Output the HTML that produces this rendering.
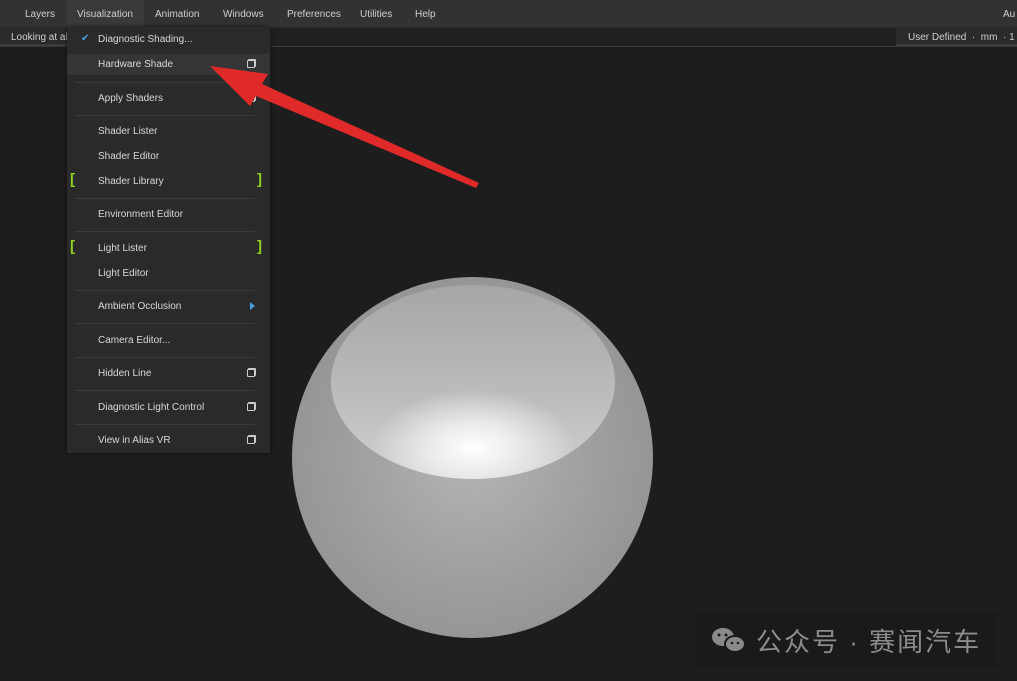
<!DOCTYPE html>
<html><head><meta charset="utf-8"><style>
*{margin:0;padding:0;box-sizing:border-box}
body{width:1017px;height:681px;background:#1d1d1d;position:relative;overflow:hidden;font-family:"Liberation Sans",sans-serif;color:#d0d0d0}
.bar1{position:absolute;left:0;top:0;width:1017px;height:27px;background:#323232}
.bar2{position:absolute;left:0;top:27px;width:1017px;height:20px;background:#2a2a2a;border-bottom:3px solid #3a3a3a}
.t{position:absolute;font-size:10px;white-space:nowrap;color:#cfcfcf}
.menu{position:absolute;left:67px;top:27px;width:203px;height:426px;background:#2a2a2a;box-shadow:0 0 4px #111}
.it{position:absolute;left:31px;font-size:10px;color:#d8d8d8}
.sep{position:absolute;left:8px;width:180px;height:1px;background:#3a3a3a}
.ic{position:absolute;left:180px;width:8px;height:8px;border:1.5px solid #ccc;border-radius:1px;box-shadow:1px -1px 0 #ccc}
.br{position:absolute;font-size:15px;color:#8fd020;font-weight:bold}
</style></head><body>
<div class="bar1"></div>
<div class="t" style="left:25px;top:9px">Layers</div>
<div style="position:absolute;left:67px;top:0;width:77px;height:27px;background:#3a3a3a"></div>
<div class="t" style="left:77px;top:9px">Visualization</div>
<div class="t" style="left:155px;top:9px">Animation</div>
<div class="t" style="left:223px;top:9px">Windows</div>
<div class="t" style="left:287px;top:9px">Preferences</div>
<div class="t" style="left:360px;top:9px">Utilities</div>
<div class="t" style="left:415px;top:9px">Help</div>
<div class="t" style="left:1003px;top:9px">Au</div>
<div class="bar2"></div>
<div style="position:absolute;left:270px;top:28px;width:626px;height:18px;background:#202020"></div>
<div class="t" style="left:11px;top:32px">Looking at al</div>
<div class="t" style="left:908px;top:32px">User Defined &nbsp;· &nbsp;mm &nbsp;· 1</div>
<div style="position:absolute;left:292px;top:277px;width:361px;height:361px;border-radius:50%;overflow:hidden;background:radial-gradient(circle at 50% 50%,#b4b4b6 0%,#a2a2a4 40%,#969698 70%,#7c7c7e 88%,#58585a 100%)">
<div style="position:absolute;left:39px;top:8px;width:284px;height:194px;border-radius:50%;background:radial-gradient(ellipse 36% 30% at 50% 84%,rgba(255,255,255,1) 0%,rgba(240,240,240,.9) 40%,rgba(200,200,202,0) 100%),linear-gradient(#a6a6a8,#bdbdbf 60%,#d0d0d0)"></div>
</div>
<div class="menu">
<div style="position:absolute;left:0;top:27px;width:203px;height:21px;background:#353535"></div>
<div class="it" style="left:14px;top:6px;color:#4a9fe0">✔</div>
<div class="it" style="top:7px">Diagnostic Shading...</div>
<div class="it" style="top:32px">Hardware Shade</div><div class="ic" style="top:33px"></div>
<div class="sep" style="top:55px"></div>
<div class="it" style="top:66px">Apply Shaders</div><div class="ic" style="top:67px"></div>
<div class="sep" style="top:88px"></div>
<div class="it" style="top:99px">Shader Lister</div>
<div class="it" style="top:124px">Shader Editor</div>
<div class="br" style="left:3px;top:144px">[</div><div class="br" style="left:190px;top:144px">]</div>
<div class="it" style="top:149px">Shader Library</div>
<div class="sep" style="top:171px"></div>
<div class="it" style="top:182px">Environment Editor</div>
<div class="sep" style="top:204px"></div>
<div class="br" style="left:3px;top:211px">[</div><div class="br" style="left:190px;top:211px">]</div>
<div class="it" style="top:216px">Light Lister</div>
<div class="it" style="top:241px">Light Editor</div>
<div class="sep" style="top:263px"></div>
<div class="it" style="top:274px">Ambient Occlusion</div>
<div style="position:absolute;left:183px;top:275px;border-left:5px solid #4a9fe0;border-top:4px solid transparent;border-bottom:4px solid transparent"></div>
<div class="sep" style="top:296px"></div>
<div class="it" style="top:308px">Camera Editor...</div>
<div class="sep" style="top:330px"></div>
<div class="it" style="top:341px">Hidden Line</div><div class="ic" style="top:342px"></div>
<div class="sep" style="top:363px"></div>
<div class="it" style="top:375px">Diagnostic Light Control</div><div class="ic" style="top:376px"></div>
<div class="sep" style="top:397px"></div>
<div class="it" style="top:408px">View in Alias VR</div><div class="ic" style="top:409px"></div>
</div>
<svg style="position:absolute;left:0;top:0" width="1017" height="681"><polygon points="210,66 268,74 262,84 479,183 476,188 256,96 250,106" fill="#e02a2a"/></svg>
<div style="position:absolute;left:697px;top:612px;width:300px;height:56px;background:#1a1a1a"></div>
<svg style="position:absolute;left:710px;top:625px" width="40" height="32"><ellipse cx="13" cy="12" rx="11" ry="9" fill="#8a8a8a"/><ellipse cx="25" cy="19" rx="10" ry="8" fill="#8a8a8a" stroke="#1a1a1a" stroke-width="2"/><circle cx="9" cy="10" r="1.5" fill="#1a1a1a"/><circle cx="16" cy="10" r="1.5" fill="#1a1a1a"/><circle cx="22" cy="18" r="1.3" fill="#1a1a1a"/><circle cx="28" cy="18" r="1.3" fill="#1a1a1a"/></svg>
<div style="position:absolute;left:756px;top:622px;font-size:26px;letter-spacing:2px;color:#8c8c8c;font-family:'Liberation Sans','Noto Sans CJK SC',sans-serif;white-space:nowrap">公众号 · 赛闻汽车</div>
</body></html>
